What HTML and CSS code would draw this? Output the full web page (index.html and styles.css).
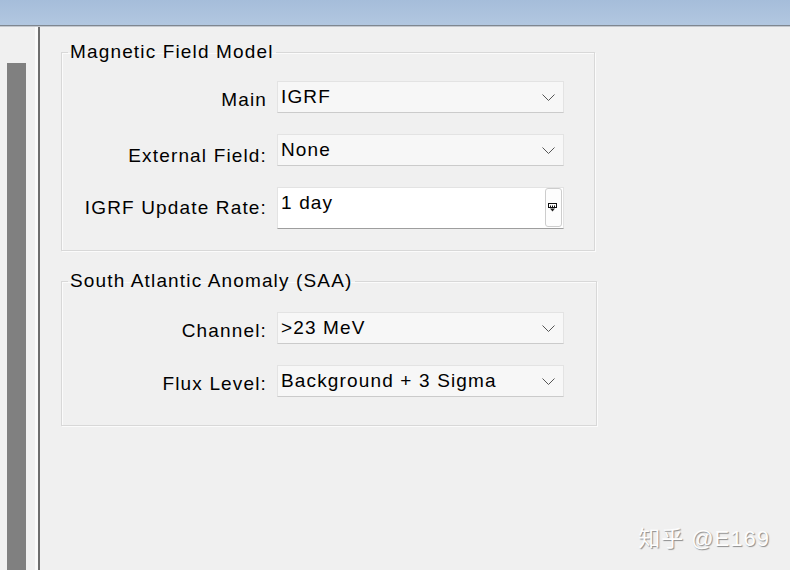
FILE: index.html
```html
<!DOCTYPE html>
<html lang="en">
<head>
<meta charset="utf-8">
<title>Magnetic Field Model</title>
<link rel="stylesheet" href="styles.css">
</head>
<body>
<div class="titlebar"></div>
<div class="main">
  <div class="sidebar"><div class="scrollbar"></div></div>
  <div class="divider"></div>
  <div class="content">
    <fieldset class="group group-mag">
      <legend>Magnetic Field Model</legend>
      <div class="form">
        <label class="lbl">Main</label>
        <div class="combo"><span class="val">IGRF</span>
          <svg class="chev" width="13" height="7" viewBox="0 0 13 7"><polyline points="0.5,0.5 6.5,6.5 12.5,0.5" fill="none" stroke="#555" stroke-width="1"/></svg>
        </div>
        <label class="lbl lbl-low">External Field:</label>
        <div class="combo"><span class="val">None</span>
          <svg class="chev" width="13" height="7" viewBox="0 0 13 7"><polyline points="0.5,0.5 6.5,6.5 12.5,0.5" fill="none" stroke="#555" stroke-width="1"/></svg>
        </div>
        <label class="lbl lbl-tall">IGRF Update Rate:</label>
        <div class="spinner"><span class="val">1 day</span>
          <div class="spin-btn">
            <svg width="9" height="9" viewBox="0 0 9 9"><rect x="0.5" y="0.5" width="8" height="4" fill="#fff" stroke="#111"/><path d="M2.5 2.5v2M4.5 2.5v2M6.5 2.5v2" stroke="#111"/><path d="M2 5.5h5l-2.5 3z" fill="#222"/></svg>
          </div>
        </div>
      </div>
    </fieldset>
    <fieldset class="group group-saa">
      <legend>South Atlantic Anomaly (SAA)</legend>
      <div class="form">
        <label class="lbl">Channel:</label>
        <div class="combo"><span class="val">&gt;23 MeV</span>
          <svg class="chev" width="13" height="7" viewBox="0 0 13 7"><polyline points="0.5,0.5 6.5,6.5 12.5,0.5" fill="none" stroke="#555" stroke-width="1"/></svg>
        </div>
        <label class="lbl">Flux Level:</label>
        <div class="combo"><span class="val">Background + 3 Sigma</span>
          <svg class="chev" width="13" height="7" viewBox="0 0 13 7"><polyline points="0.5,0.5 6.5,6.5 12.5,0.5" fill="none" stroke="#555" stroke-width="1"/></svg>
        </div>
      </div>
    </fieldset>
    <div class="watermark">知乎 @E169</div>
  </div>
</div>
</body>
</html>
```
FILE: styles.css
```css
html, body {
  margin: 0;
  padding: 0;
  height: 570px;
  overflow: hidden;
}
body {
  background: #f0f0f0;
  font-family: "Liberation Sans", Arial, sans-serif;
  font-size: 19px;
  letter-spacing: 1.15px;
  color: #000;
  display: flex;
  flex-direction: column;
}
.titlebar {
  height: 25px;
  background: linear-gradient(#a5bdda, #b2c7e0);
  border-bottom: 1px solid #7f8790;
  box-shadow: 0 1px 0 #c4c8ce;
  flex: none;
}
.main {
  flex: 1;
  display: flex;
  margin-top: 1px;
}
.sidebar {
  width: 35px;
  background: #f0f0f0;
  display: flex;
  flex-direction: column;
}
.scrollbar {
  margin: 36px 0 0 7px;
  width: 19px;
  flex: 1;
  background: #808080;
}
.divider {
  width: 3px;
  background: #fbfbfb;
  border-right: 2px solid #6e6e6e;
}
.content {
  flex: 1;
  position: relative;
  padding-left: 21px;
}
.group {
  margin: 0;
  padding: 0;
  border: 1px solid #d8d8d8;
  box-shadow: inset 1px 1px 0 #fbfbfb, 1px 1px 0 #fbfbfb;
  box-sizing: border-box;
}
.group legend {
  margin-left: 6px;
  padding: 0 2px;
  line-height: 22px;
}
.group-mag {
  width: 534px;
  margin-top: 14px;
  padding: 18px 0 21px 0;
}
.group-saa {
  width: 536px;
  margin-top: 19px;
  padding: 20px 0 28px 0;
}
.form {
  display: grid;
  grid-template-columns: 205px 287px;
  column-gap: 10px;
  row-gap: 21px;
}
.lbl {
  text-align: right;
  line-height: 26px;
  padding-top: 6px;
  align-self: start;
  white-space: nowrap;
}
.lbl-low {
  line-height: 20px;
  padding-top: 12px;
}
.lbl-tall {
  line-height: 42px;
  padding-top: 0;
}
.combo {
  height: 32px;
  box-sizing: border-box;
  background: #f7f7f7;
  border: 1px solid #e3e3e3;
  border-bottom-color: #cbcbcb;
  display: flex;
  align-items: center;
  justify-content: space-between;
  padding: 0 8px 0 3px;
}
.val {
  line-height: 30px;
  white-space: nowrap;
}
.chev {
  display: block;
  flex: none;
}
.spinner {
  height: 42px;
  box-sizing: border-box;
  background: #fff;
  border: 1px solid #e3e3e3;
  border-bottom-color: #9e9e9e;
  display: flex;
  align-items: flex-start;
  justify-content: space-between;
  padding: 0 1px 0 3px;
}
.spin-btn {
  width: 17px;
  height: 39px;
  box-sizing: border-box;
  border: 1px solid #cdcdcd;
  border-radius: 3px;
  background: #fdfdfd;
  display: flex;
  align-items: center;
  justify-content: center;
  padding-right: 2px;
}
.spin-btn svg {
  display: block;
}
.watermark {
  position: absolute;
  right: 20px;
  bottom: 18px;
  font-family: "Liberation Sans", "Noto Sans CJK SC", sans-serif;
  font-size: 22px;
  line-height: 26px;
  letter-spacing: 1px;
  color: #fdfdfd;
  text-shadow: 1px 1px 1px #8c8c8c;
}
```
